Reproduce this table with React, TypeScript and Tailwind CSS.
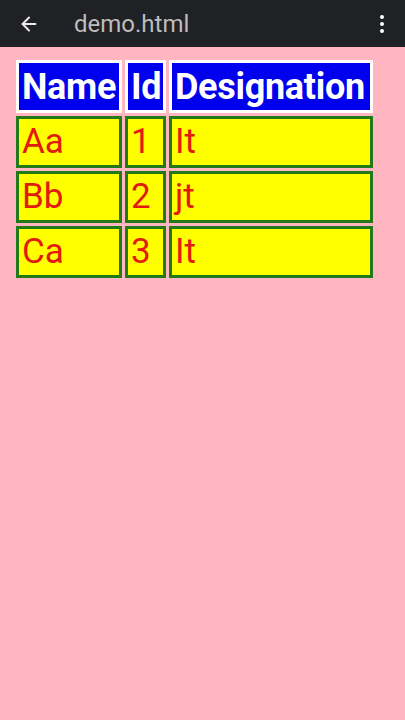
import { ArrowLeft } from "lucide-react";

const rows = [
  ["Aa", "1", "It"],
  ["Bb", "2", "jt"],
  ["Ca", "3", "It"],
];

export default function App() {
  return (
    <div className="min-h-[720px] w-[405px] bg-[#ffb6c1] font-['Roboto',sans-serif]">
      <div className="flex h-[47px] items-center bg-[#202124] pl-[18px] pr-[21px]">
        <ArrowLeft size={22} strokeWidth={2.2} className="text-[#e8e8e8]" />
        <span className="ml-[34px] text-[24px] text-[#bdbdbd]">demo.html</span>
        <div className="ml-auto flex flex-col gap-[3px]">
          <span className="h-[4px] w-[4px] rounded-full bg-white" />
          <span className="h-[4px] w-[4px] rounded-full bg-white" />
          <span className="h-[4px] w-[4px] rounded-full bg-white" />
        </div>
      </div>
      <div className="ml-[16px] mt-[13px] grid grid-cols-[106px_41px_204px] gap-[3px]">
        {["Name", "Id", "Designation"].map((h) => (
          <div
            key={h}
            className="flex h-[53px] items-center border-[3px] border-white bg-[#0000ee] px-[3px] text-[36px] font-bold tracking-[-0.3px] text-white"
          >
            {h}
          </div>
        ))}
        {rows.map((r) =>
          r.map((c, i) => (
            <div
              key={r[0] + i}
              className="flex h-[52px] items-center border-[3px] border-[#217a17] bg-[#ffff00] px-[3px] text-[35px] text-[#e21b0c]"
            >
              {c}
            </div>
          ))
        )}
      </div>
    </div>
  );
}
